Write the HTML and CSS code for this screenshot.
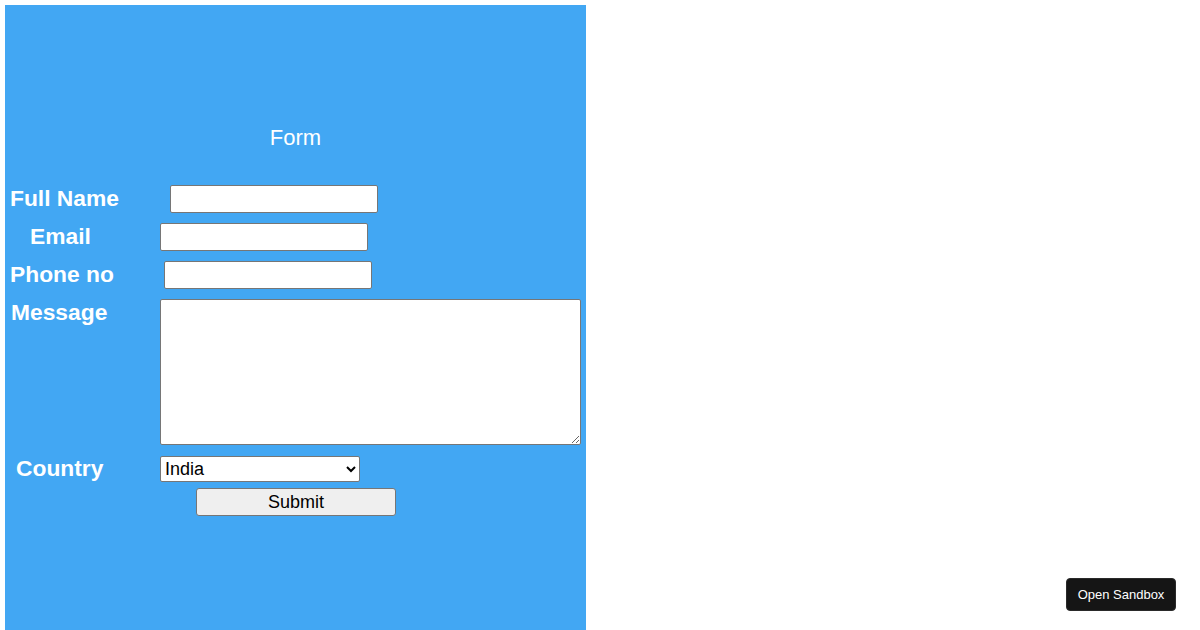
FILE: index.html
```html
<!DOCTYPE html>
<html>
<head>
<meta charset="utf-8">
<link rel="stylesheet" href="styles.css">
</head>
<body>
<div class="panel">
  <div class="title">Form</div>
  <form class="form">
    <div class="row r1">
      <label class="lbl l1">Full Name</label>
      <input class="field f1" type="text">
    </div>
    <div class="row r2">
      <label class="lbl l2">Email</label>
      <input class="field f2" type="text">
    </div>
    <div class="row r3">
      <label class="lbl l3">Phone no</label>
      <input class="field f3" type="text">
    </div>
    <div class="row r4">
      <label class="lbl l4">Message</label>
      <textarea class="msg"></textarea>
    </div>
    <div class="row r5">
      <label class="lbl l5 short">Country</label>
      <select class="sel"><option>India</option></select>
    </div>
    <div class="row r6">
      <span class="lbl"></span>
      <button type="button" class="submit">Submit</button>
    </div>
  </form>
</div>
<button type="button" class="sandbox">Open Sandbox</button>
</body>
</html>
```
FILE: styles.css
```css
html, body {
  margin: 0;
  padding: 0;
  background: #ffffff;
  font-family: "Liberation Sans", Arial, sans-serif;
}
body {
  padding: 5px;
  height: 630px;
  box-sizing: border-box;
  overflow: hidden;
}
.panel {
  width: 581px;
  height: 640px;
  background: #42a7f3;
  padding-top: 120px;
  box-sizing: border-box;
  color: #ffffff;
}
.title {
  text-align: center;
  font-size: 22px;
  line-height: 25px;
}
.form {
  margin: 35px 0 0 0;
}
.row {
  display: flex;
  align-items: flex-start;
}
.r2, .r3, .r4 { margin-top: 10px; }
.r5 { margin-top: 11px; }
.r6 { margin-top: 6px; }
.lbl {
  flex: 0 0 auto;
  width: 155px;
  box-sizing: border-box;
  font-size: 22.8px;
  font-weight: bold;
  line-height: 26px;
  color: #ffffff;
}
.lbl.short { line-height: 24px; }
.l1 { padding-left: 5px; }
.l2 { padding-left: 25px; }
.l3 { padding-left: 5px; }
.l4 { padding-left: 6px; }
.l5 { padding-left: 11px; }
.field {
  width: 208px;
  height: 28px;
  box-sizing: border-box;
  border: 1px solid #767676;
  border-radius: 2px;
  background: #ffffff;
  margin: 0;
  font-size: 16px;
  font-family: "Liberation Sans", Arial, sans-serif;
}
.f1 { margin-left: 10px; }
.f2 { margin-left: 0; }
.f3 { margin-left: 4px; }
.msg {
  width: 421px;
  height: 146px;
  box-sizing: border-box;
  border: 1px solid #767676;
  border-radius: 2px;
  margin: 0;
  background: #ffffff;
}
.sel {
  width: 200px;
  height: 26px;
  box-sizing: border-box;
  border: 1px solid #767676;
  border-radius: 2px;
  margin: 0;
  background: #ffffff;
  color: #000000;
  font-size: 18px;
  font-family: "Liberation Sans", Arial, sans-serif;
}
.submit {
  margin: 0 0 0 36px;
  width: 200px;
  height: 28px;
  box-sizing: border-box;
  border: 1px solid #767676;
  border-radius: 3px;
  background: #efefef;
  color: #000000;
  font-size: 18px;
  font-family: "Liberation Sans", Arial, sans-serif;
  padding: 0;
}
.sandbox {
  position: fixed;
  right: 24px;
  bottom: 19px;
  width: 110px;
  height: 33px;
  background: #151515;
  color: #ffffff;
  border: 1px solid #2a2a2a;
  border-radius: 4px;
  font-size: 13px;
  font-family: "Liberation Sans", Arial, sans-serif;
  padding: 0;
}
```
